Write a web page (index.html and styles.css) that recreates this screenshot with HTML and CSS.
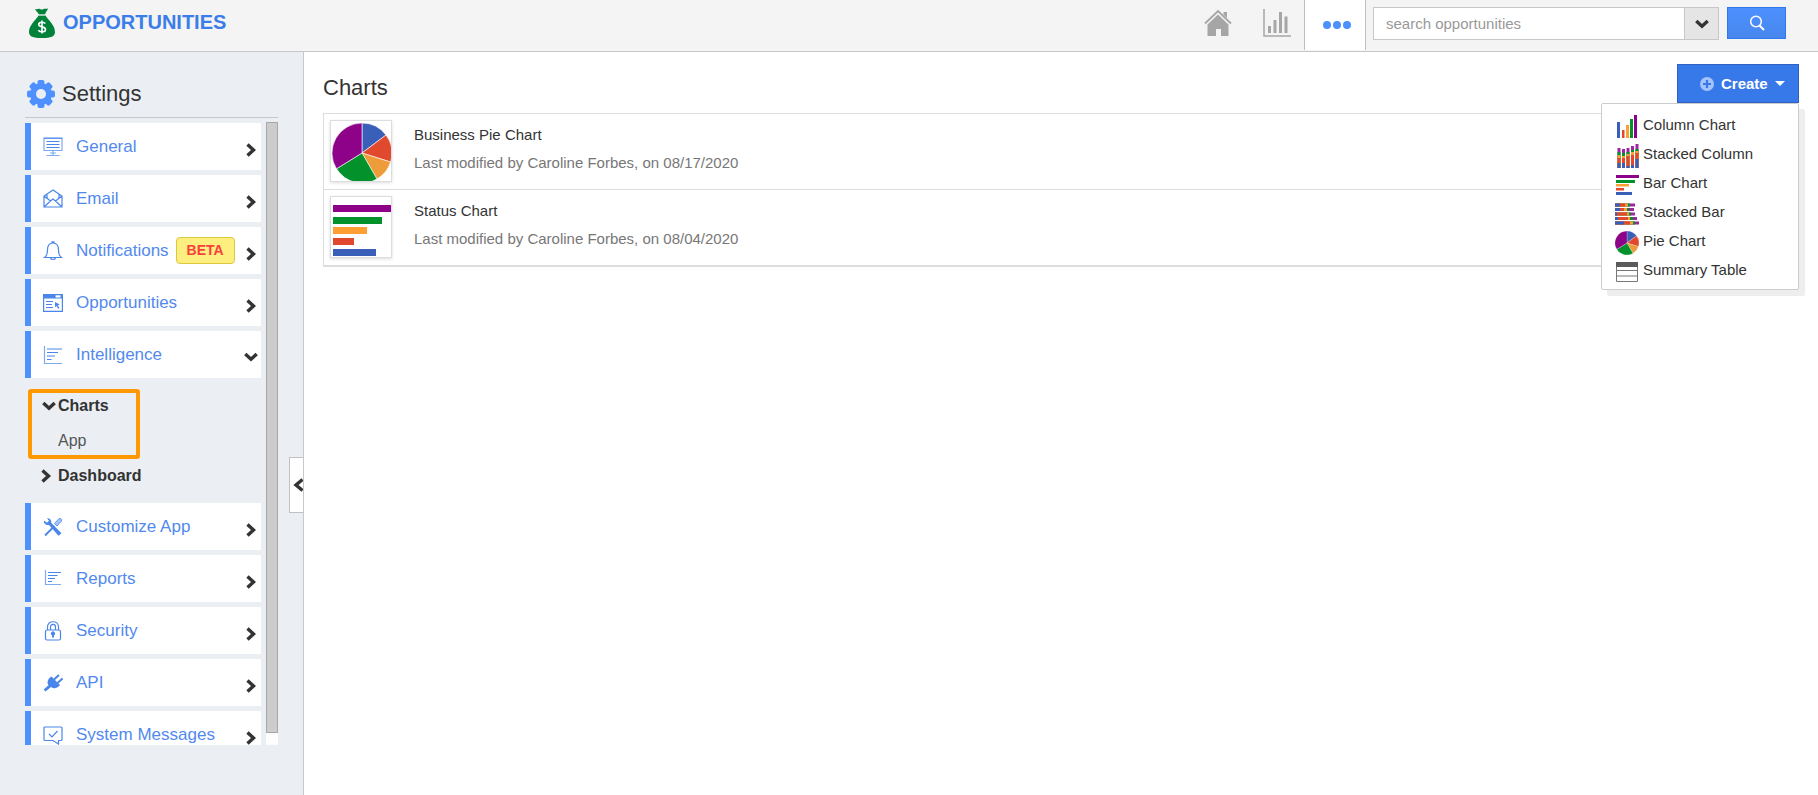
FILE: index.html
```html
<!DOCTYPE html>
<html lang="en">
<head>
    <meta charset="UTF-8">
    <meta name="viewport" content="width=device-width, initial-scale=1.0">
    <title>Opportunities - Settings</title>
    <link rel="stylesheet" href="styles.css">
</head>
<body>
    <!-- Shared shapes -->
    <svg class="sprite" aria-hidden="true">
        <symbol id="chevron-right" viewBox="0 0 12 14">
            <path d="M2.500 1.500 8.500 7l-6 5.500" fill="none" stroke="#333" stroke-width="3.400"/>
        </symbol>
        <symbol id="chevron-down" viewBox="0 0 14 10">
            <path d="M1.300 2 7 7.300 12.700 2" fill="none" stroke="#333" stroke-width="3.400"/>
        </symbol>
        <symbol id="pie" viewBox="0 0 60 60">
            <g stroke="#fff" stroke-width=".6">
                <path d="M30 30V0A30 30 0 0 1 54 12Z" fill="#3a5fb8"/>
                <path d="M30 30 54 12A30 30 0 0 1 58.600 39Z" fill="#e0492d"/>
                <path d="M30 30 58.600 39A30 30 0 0 1 45 56Z" fill="#ee9b3a"/>
                <path d="M30 30 45 56A30 30 0 0 1 4.500 45.800Z" fill="#03912b"/>
                <path d="M30 30 4.500 45.800A30 30 0 0 1 30 0Z" fill="#8e0289"/>
            </g>
        </symbol>
    </svg>

    <header class="topbar">
        <a class="brand" href="#">
            <svg class="brand-icon" viewBox="0 0 28 30" aria-hidden="true">
                <path d="M7 1c2 .8 3.500-.6 5 0s2 .8 3.500 0 2.500 0 4.500-.4c-.6 2.200-2.200 3.400-3 5.900h-6C10 4 7.800 3.400 7 1z" fill="#00823b"/>
                <path d="M10.500 7.500h7C20 12 27 17 27 24c0 4.500-4 6-13 6S1 28.500 1 24C1 17 8 12 10.500 7.500z" fill="#00823b"/>
                <path d="M10.500 7h7" stroke="#d4ebdc" stroke-width=".8"/>
                <path d="M17.300 15.600c-.8-1-2-1.400-3.300-1.400-2 0-3.300.9-3.300 2.300 0 3.200 6.800 1.500 6.800 4.900 0 1.500-1.500 2.400-3.500 2.400-1.500 0-2.900-.5-3.700-1.600M14 12.500v13" fill="none" stroke="#fff" stroke-width="1.600"/>
            </svg>
            <span>OPPORTUNITIES</span>
        </a>

        <nav class="top-nav">
            <a class="top-link" href="#" aria-label="Home">
                <svg width="28" height="28" viewBox="0 0 28 28" aria-hidden="true">
                    <path d="M1 14.500 14 2l13 12.500" fill="none" stroke="#a6a6a6" stroke-width="1.800"/>
                    <path d="M19.500 3h3.500v6l-3.500-3.300zM14 5.500 24.500 15.500V27H17v-7h-5v7H3.500V15.500z" fill="#a6a6a6"/>
                </svg>
            </a>
            <a class="top-link" href="#" aria-label="Reports">
                <svg width="28" height="28" viewBox="0 0 28 28" aria-hidden="true">
                    <path d="M1 0v27h27" fill="none" stroke="#a6a6a6" stroke-width="1.500"/>
                    <path d="M5 17h3v7H5zM10.500 11h3v13h-3zM16 3h3v21h-3zM21.500 7.500h3V24h-3z" fill="#a6a6a6"/>
                </svg>
            </a>
            <a class="top-link active" href="#" aria-label="More">
                <svg width="28" height="8" viewBox="0 0 28 8" aria-hidden="true">
                    <g fill="#4d90fe"><circle cx="4" cy="4" r="4"/><circle cx="14" cy="4" r="4"/><circle cx="24" cy="4" r="4"/></g>
                </svg>
            </a>
        </nav>

        <form class="search">
            <input type="text" placeholder="search opportunities" aria-label="Search opportunities">
            <button class="search-options" type="button" aria-label="Search options">
                <svg width="14" height="10"><use href="#chevron-down"/></svg>
            </button>
            <button class="search-submit" type="submit" aria-label="Search">
                <svg width="16" height="16" viewBox="0 0 16 16" aria-hidden="true">
                    <circle cx="7" cy="6.500" r="5.300" fill="none" stroke="#fff" stroke-width="1.500"/>
                    <path d="m10.500 10.500 4.500 4.500" stroke="#fff" stroke-width="2"/>
                </svg>
            </button>
        </form>
    </header>

    <div class="layout">
        <aside class="sidebar">
            <h2 class="sidebar-title">
                <svg width="28" height="28" viewBox="-14 -14 28 28" aria-hidden="true">
                    <g fill="#4d90fe">
                        <rect x="-3.500" y="-14" width="7" height="28" rx="2"/>
                        <rect x="-3.500" y="-14" width="7" height="28" rx="2" transform="rotate(45)"/>
                        <rect x="-3.500" y="-14" width="7" height="28" rx="2" transform="rotate(90)"/>
                        <rect x="-3.500" y="-14" width="7" height="28" rx="2" transform="rotate(135)"/>
                        <circle r="10.800"/>
                    </g>
                    <circle r="5" fill="#ebeff4"/>
                </svg>
                Settings
            </h2>

            <div class="menu-area">
                <nav class="menu">
                    <a class="menu-item" href="#">
                        <svg class="menu-icon" viewBox="0 0 20 20"><path d="M1 1.500h18v12H1zM10 14v4M3.500 18.500h13M7 16h6" opacity=".7"/><path d="M3.500 4.500h13M3.500 7.500h13M3.500 10.500h13M.5 1h19"/></svg>
                        <span>General</span>
                        <svg class="arrow" width="12" height="14"><use href="#chevron-right"/></svg>
                    </a>
                    <a class="menu-item" href="#">
                        <svg class="menu-icon" viewBox="0 0 20 20"><path d="M1 7v11h18V7l-9-6zM1 7l6.500 5L10 10l2.500 2L19 7M1 18l6.500-6M19 18l-6.500-6M4 9V5.500M16 9V5.500"/></svg>
                        <span>Email</span>
                        <svg class="arrow" width="12" height="14"><use href="#chevron-right"/></svg>
                    </a>
                    <a class="menu-item" href="#">
                        <svg class="menu-icon" viewBox="0 0 20 20"><path d="M1.500 16.500C4 15 4.500 12.500 4.500 9c0-4 1.500-7 5.500-7s5.500 3 5.500 7c0 3.500.5 6 3 7.500zM9 2V.8h2V2M7.500 17c.5 2 4.500 2 5 0"/></svg>
                        <span>Notifications</span>
                        <em class="badge">BETA</em>
                        <svg class="arrow" width="12" height="14"><use href="#chevron-right"/></svg>
                    </a>
                    <a class="menu-item" href="#">
                        <svg class="menu-icon" viewBox="0 0 20 20"><path d="M.6 1.600h18.800v16.800H.6z"/><path d="M.6 1h12v4H.6zM17.500 1h2v4h-2z" fill="#4a86ea" stroke="none"/><path d="M.6 5h19M3 8.500h7M3 11.500h6M3 14.500h7"/><path d="m12 9 4.800 2.500-2 .7 1.700 2.800-1.300.8-1.600-2.800-1.600 1.300z" fill="#4a86ea" stroke="none"/></svg>
                        <span>Opportunities</span>
                        <svg class="arrow" width="12" height="14"><use href="#chevron-right"/></svg>
                    </a>
                    <a class="menu-item" href="#">
                        <svg class="menu-icon" viewBox="0 0 20 20"><path d="M1.500 1v17.500H19" opacity=".7"/><path d="M4 4h15M4 7.500h11M4 11h8M4 14.500h4.500"/></svg>
                        <span>Intelligence</span>
                        <svg class="arrow open" width="14" height="10"><use href="#chevron-down"/></svg>
                    </a>

                    <div class="submenu">
                        <div class="submenu-current">
                            <a class="submenu-title" href="#"><svg width="14" height="10"><use href="#chevron-down"/></svg>Charts</a>
                            <a class="submenu-link" href="#">App</a>
                        </div>
                        <a class="submenu-title last" href="#"><svg width="12" height="14"><use href="#chevron-right"/></svg>Dashboard</a>
                    </div>

                    <a class="menu-item" href="#">
                        <svg class="menu-icon" viewBox="0 0 20 20"><path d="m2 18.500 9.500-9.500" stroke-width="1.800"/><path d="M11.500 6.500 16 1.500c1-.8 3.400 1.200 2.500 2.500L14 9z" fill="#a5c4f7" stroke-width=".8"/><path d="M1 3.500C.5 6 2.500 8.500 6 8l9.500 10.800 3-2.600L8.300 6C8.600 2.800 6.500.8 4 1.300l2 2.400-1.900 2z" fill="#4a86ea" stroke="none"/></svg>
                        <span>Customize App</span>
                        <svg class="arrow" width="12" height="14"><use href="#chevron-right"/></svg>
                    </a>
                    <a class="menu-item" href="#">
                        <svg class="menu-icon" viewBox="0 0 20 20"><path d="M2.500 1v14.500H18" opacity=".7"/><path d="M5 3.500h13M5 6.500h9.500M5 9.500h7M5 12.500h4"/></svg>
                        <span>Reports</span>
                        <svg class="arrow" width="12" height="14"><use href="#chevron-right"/></svg>
                    </a>
                    <a class="menu-item" href="#">
                        <svg class="menu-icon" viewBox="0 0 20 20"><path d="M4 9h12c1 0 1.500.5 1.500 1.500v7c0 1-.5 1.500-1.500 1.500H4c-1 0-1.500-.5-1.500-1.500v-7C2.500 9.500 3 9 4 9zM4.500 9V6c0-7 11-7 11 0v3M7.500 9V6c0-3.500 5-3.500 5 0v3z"/><path d="M9 16.500v-2.200a2 2 0 1 1 2 0v2.200z" fill="#4a86ea" stroke="none"/></svg>
                        <span>Security</span>
                        <svg class="arrow" width="12" height="14"><use href="#chevron-right"/></svg>
                    </a>
                    <a class="menu-item" href="#">
                        <svg class="menu-icon" viewBox="0 0 20 20"><path d="M8.500 3.500 17 12c-2 3-6 4.500-9 2L3.500 17.500 2 16.500l3.500-4C3.500 9 5 5.500 8.500 3.500z" fill="#4a86ea" stroke="none"/><path d="M1.500 17.500 6 13.500" stroke-width="2.500"/><path d="m11 6.500 5-4.500M14.500 10l5-4.500" stroke-width="2"/></svg>
                        <span>API</span>
                        <svg class="arrow" width="12" height="14"><use href="#chevron-right"/></svg>
                    </a>
                    <a class="menu-item" href="#">
                        <svg class="menu-icon" viewBox="0 0 20 20"><path d="M2 2h16c.6 0 1 .4 1 1v11.500c0 .6-.4 1-1 1h-2.500V19L10 15.500H2c-.6 0-1-.4-1-1V3c0-.6.400-1 1-1z"/><path d="m6 9 3 3 5.500-6"/></svg>
                        <span>System Messages</span>
                        <svg class="arrow" width="12" height="14"><use href="#chevron-right"/></svg>
                    </a>
                </nav>
                <div class="scrollbar"><div class="scrollbar-thumb"></div></div>
            </div>

            <button class="collapse" type="button" aria-label="Collapse sidebar">
                <svg width="10" height="14" viewBox="0 0 10 14"><path d="M9.500 1.500 3 7l6.500 5.500" fill="none" stroke="#333" stroke-width="3.400"/></svg>
            </button>
        </aside>

        <main class="content">
            <div class="content-head">
                <h1>Charts</h1>
                <div class="create">
                    <button class="create-button" type="button">
                        <svg width="14" height="14" viewBox="0 0 14 14" aria-hidden="true">
                            <circle cx="7" cy="7" r="7" fill="#a3c3fb"/>
                            <path d="M7 3v8M3 7h8" stroke="#3779e8" stroke-width="2.200"/>
                        </svg>
                        Create
                        <span class="caret"></span>
                    </button>
                    <ul class="create-menu">
                        <li><a href="#">
                            <svg viewBox="0 0 24 24">
                                <path d="M2 7h3v16H2z" fill="#3a5fb8"/><path d="M7 15h2.500v8H7z" fill="#e0492d"/><path d="M11 10h3v13h-3z" fill="#fba035"/><path d="M15 4h3v19h-3z" fill="#03912b"/><path d="M19 0h3v23h-3z" fill="#8e0289"/>
                            </svg>Column Chart</a></li>
                        <li><a href="#">
                            <svg viewBox="0 0 24 24">
                                <path d="M4 4v20M8.500 5v19M13 4v20M17.500 2v22M22 0v24" stroke="#9c27a0" stroke-width="3"/>
                                <path d="M4 8v16M8.500 9v15M13 8v16M17.500 6v18M22 5v19" stroke="#03912b" stroke-width="3"/>
                                <path d="M4 11v13M8.500 12v12M13 10v14M17.500 8v16M22 7v17" stroke="#fba035" stroke-width="3"/>
                                <path d="M4 14v10M8.500 14v10M13 12v12M17.500 11v13M22 9v15" stroke="#e0492d" stroke-width="3"/>
                                <path d="M4 19v5M8.500 19v5M13 22v2M17.500 21v3M22 15v9" stroke="#3a5fb8" stroke-width="3"/>
                            </svg>Stacked Column</a></li>
                        <li><a href="#">
                            <svg viewBox="0 0 24 24">
                                <path d="M1 2h23v3H1z" fill="#8e0289"/><path d="M1 7h19v3H1z" fill="#03912b"/><path d="M1 11h13v2.500H1z" fill="#fba035"/><path d="M1 15h8v2.500H1z" fill="#e0492d"/><path d="M1 19h16v3H1z" fill="#3a5fb8"/>
                            </svg>Bar Chart</a></li>
                        <li><a href="#">
                            <svg viewBox="0 0 24 24">
                                <path d="M0 3h20M0 7.500h19M0 12h20M0 16.500h22M0 21h24" stroke="#9c27a0" stroke-width="3"/>
                                <path d="M0 3h15M0 7.500h14M0 12h16M0 16.500h18M0 21h20" stroke="#03912b" stroke-width="3"/>
                                <path d="M0 3h13M0 7.500h12M0 12h14M0 16.500h15M0 21h18" stroke="#fba035" stroke-width="3"/>
                                <path d="M0 3h10M0 7.500h9M0 12h12M0 16.500h13M0 21h15" stroke="#e0492d" stroke-width="3"/>
                                <path d="M0 3h5M0 7.500h5M0 12h2M0 16.500h3M0 21h9" stroke="#3a5fb8" stroke-width="3"/>
                            </svg>Stacked Bar</a></li>
                        <li><a href="#"><svg><use href="#pie"/></svg>Pie Chart</a></li>
                        <li><a href="#">
                            <svg viewBox="0 0 24 24">
                                <path d="M1.500 3h21v18.500h-21zM1 10.500h22M1 16h22" fill="none" stroke="#777"/><path d="M1 2h22v5H1z" fill="#5b5b5b"/>
                            </svg>Summary Table</a></li>
                    </ul>
                </div>
            </div>

            <ul class="chart-list">
                <li class="chart-row">
                    <div class="thumb"><svg class="thumb-pie"><use href="#pie"/></svg></div>
                    <div class="chart-info">
                        <a href="#">Business Pie Chart</a>
                        <p>Last modified by Caroline Forbes, on 08/17/2020</p>
                    </div>
                </li>
                <li class="chart-row">
                    <div class="thumb">
                        <svg width="60" height="60" viewBox="0 0 60 60">
                            <path d="M2 8h58v7H2z" fill="#8e0289"/><path d="M2 20h49v7H2z" fill="#03912b"/><path d="M2 30h34v7H2z" fill="#fd9f32"/><path d="M2 41h21v7H2z" fill="#e0492d"/><path d="M2 52h43v7H2z" fill="#3a5fb8"/>
                        </svg>
                    </div>
                    <div class="chart-info">
                        <a href="#">Status Chart</a>
                        <p>Last modified by Caroline Forbes, on 08/04/2020</p>
                    </div>
                </li>
            </ul>
        </main>
    </div>
</body>
</html>
```

FILE: styles.css
```css
* {
    margin: 0;
    padding: 0;
    box-sizing: border-box;
}

body {
    display: flex;
    flex-direction: column;
    height: 100vh;
    font-family: 'Liberation Sans', Arial, sans-serif;
    font-size: 15px;
    color: #333;
    background-color: #fff;
}

a {
    color: inherit;
    text-decoration: none;
}

ul {
    list-style: none;
}

svg {
    display: block;
    flex-shrink: 0;
}

button,
input {
    font: inherit;
}

button {
    cursor: pointer;
}

.sprite {
    position: absolute;
    width: 0;
    height: 0;
}

/* Top bar */
.topbar {
    display: flex;
    flex-shrink: 0;
    height: 52px;
    padding: 0 32px 0 28px;
    background-color: #f4f4f4;
    border-bottom: 1px solid #c8c8c8;
}

.brand {
    display: flex;
    align-items: center;
    align-self: flex-start;
    gap: 7px;
    height: 46px;
    color: #3b7de9;
    font-size: 20px;
    font-weight: bold;
}

.brand span {
    padding-bottom: 2px;
}

.brand-icon {
    width: 28px;
    height: 30px;
}

.top-nav {
    display: flex;
    margin-left: auto;
}

.top-link {
    display: flex;
    align-items: center;
    justify-content: flex-end;
    width: 59px;
    height: 50px;
    padding: 0 13px 4px 0;
}

.top-link.active {
    justify-content: center;
    width: 62px;
    padding: 0 0 0 3px;
    background-color: #fff;
    border: 1px solid #c0c0c0;
    border-width: 0 1px;
}

.search {
    display: flex;
    align-items: flex-start;
    margin: 7px 0 0 7px;
}

.search input {
    width: 312px;
    height: 33px;
    padding: 0 12px;
    border: 1px solid #c8c8c8;
    outline: none;
    color: #333;
}

.search input::placeholder {
    color: #999;
}

.search-options {
    display: flex;
    align-items: center;
    justify-content: center;
    width: 34px;
    height: 33px;
    background-color: #e5e5e5;
    border: 1px solid #c8c8c8;
    border-left: none;
}

.search-submit {
    display: flex;
    align-items: center;
    justify-content: center;
    width: 59px;
    height: 32px;
    margin-left: 8px;
    background-image: linear-gradient(#4d90fe, #4787ed);
    border: 1px solid #3079ed;
}

/* Sidebar */
.layout {
    display: flex;
    flex: 1;
    min-height: 0;
}

.sidebar {
    position: relative;
    display: flex;
    flex-direction: column;
    width: 304px;
    padding: 18px 25px 50px;
    background-color: #ebeff4;
    border-right: 1px solid #c8c8c8;
}

.sidebar-title {
    display: flex;
    align-items: center;
    gap: 7px;
    height: 48px;
    padding: 0 2px;
    border-bottom: 1px solid #c8c8c8;
    font-size: 22px;
    font-weight: normal;
}

.menu-area {
    display: flex;
    flex: 1;
    justify-content: space-between;
    min-height: 0;
    margin-top: 4px;
}

.menu {
    display: flex;
    flex-direction: column;
    gap: 5px;
    width: 236px;
    margin-top: 1px;
    overflow: hidden;
}

.menu-item {
    display: flex;
    flex-shrink: 0;
    align-items: center;
    height: 47px;
    padding: 0 4px 0 12px;
    background-color: #fff;
    border-left: 6px solid #4d90fe;
    color: #5289ee;
    font-size: 17px;
}

.menu-icon {
    width: 20px;
    height: 20px;
    margin-right: 13px;
    fill: none;
    stroke: #4a86ea;
    stroke-width: 1.2;
}

.arrow {
    margin: 6px 0 0 auto;
}

.arrow.open {
    margin: 4px -1px 0 auto;
}

.badge {
    height: 27px;
    margin-left: 7px;
    padding: 0 10px;
    background-color: #fdee80;
    border: 1px solid #dcc83c;
    border-radius: 4px;
    color: #f8403c;
    font-size: 14px;
    font-style: normal;
    font-weight: bold;
    line-height: 25px;
}

.submenu {
    display: flex;
    flex-direction: column;
    flex-shrink: 0;
    height: 115px;
    padding: 6px 3px;
    font-size: 16px;
}

.submenu-current {
    width: 112px;
    height: 70px;
    border: 4px solid #fe9901;
    border-radius: 3px;
}

.submenu-title {
    display: flex;
    align-items: center;
    gap: 2px;
    height: 26px;
    padding-left: 10px;
    font-weight: bold;
}

.submenu-title.last {
    gap: 6px;
    height: 36px;
    padding-left: 12px;
}

.submenu-link {
    display: block;
    padding-left: 26px;
    color: #555;
    line-height: 44px;
}

.scrollbar {
    width: 12px;
    background-color: #fdfdfd;
}

.scrollbar-thumb {
    height: 98%;
    background-color: #ccc;
    border: 1px solid #a8a8a8;
}

/* Sits over the sidebar's right edge */
.collapse {
    position: absolute;
    top: 50%;
    right: 0;
    display: flex;
    align-items: center;
    justify-content: flex-end;
    width: 14px;
    height: 56px;
    margin-top: 33px;
    background-color: #fff;
    border: 1px solid #c0c0c0;
    border-right: none;
}

/* Content */
.content {
    flex: 1;
    padding: 12px 19px 0;
}

.content-head {
    display: flex;
    justify-content: space-between;
    height: 49px;
}

.content-head h1 {
    font-size: 22px;
    font-weight: normal;
    line-height: 48px;
}

.create {
    position: relative;
}

.create-button {
    display: flex;
    align-items: center;
    gap: 7px;
    width: 122px;
    height: 39px;
    padding: 0 15px 0 22px;
    background-color: #3779e8;
    border: 1px solid #2f62c4;
    color: #fff;
    font-weight: bold;
}

.caret {
    border: 5px solid transparent;
    border-top-color: #fff;
    border-bottom: none;
}

.create-menu {
    position: absolute;
    top: 39px;
    right: 0;
    width: 198px;
    padding: 6px 0 5px;
    background-color: #fff;
    border: 1px solid #ccc;
    border-radius: 2px;
    box-shadow: 6px 6px 0 #eee;
}

.create-menu a {
    display: flex;
    align-items: center;
    gap: 4px;
    height: 29px;
    padding-left: 13px;
}

.create-menu svg {
    width: 24px;
    height: 24px;
    margin-top: 5px;
}

.chart-list {
    border: 1px solid #ddd;
    border-bottom-width: 2px;
}

.chart-row {
    display: flex;
    gap: 22px;
    height: 76px;
    padding: 6px;
    border-top: 1px solid #ddd;
}

.chart-row:first-child {
    height: 75px;
    border-top: none;
}

.thumb {
    width: 62px;
    height: 62px;
    border: 1px solid #ddd;
    box-shadow: 0 1px 3px #ddd;
    overflow: hidden;
}

.thumb-pie {
    width: 60px;
    height: 60px;
    margin: 2px 0 0 1px;
}

.chart-info {
    padding-top: 1px;
    line-height: 28px;
}

.chart-info p {
    color: #777;
}
```
